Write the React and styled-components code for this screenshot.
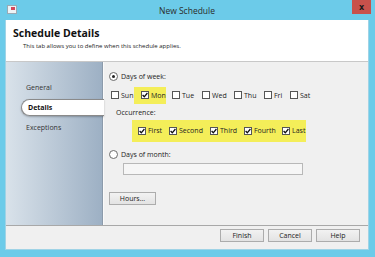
import React from "react";
import styled, { createGlobalStyle } from "styled-components";

const Global = createGlobalStyle`
  html, body {
    margin: 0;
    padding: 0;
    background: #6ccbe9;
  }
  body {
    font-family: "Open Sans", "Noto Sans", sans-serif;
  }
`;

const Window = styled.div`
  width: 375px;
  height: 257px;
  background: #6ccbe9;
  display: flex;
  flex-direction: column;
  box-sizing: border-box;
  padding: 0 6px 7px 5px;
  overflow: hidden;
`;

const TitleBar = styled.div`
  height: 20px;
  display: flex;
  align-items: center;
  position: relative;
  font-size: 8.5px;
  color: #2b2b2b;
  .icon {
    margin-left: 2px;
    margin-top: -1px;
  }
  .title {
    flex: 1;
    text-align: center;
    margin-left: -12px;
  }
`;

const CloseButton = styled.div`
  position: absolute;
  right: -2px;
  top: 0;
  width: 19px;
  height: 14px;
  background: #c8514b;
  color: #1a1a1a;
  font-family: "DejaVu Sans", sans-serif;
  font-weight: bold;
  font-size: 8px;
  display: flex;
  align-items: center;
  justify-content: center;
`;

const Body = styled.div`
  flex: 1;
  display: flex;
  flex-direction: column;
  background: #f0f0f0;
  border: 1px solid #9fd3e6;
  border-top: none;
`;

const Header = styled.div`
  height: 42px;
  background: #fff;
  border-bottom: 1px solid #c8c8c8;
  box-sizing: border-box;
  padding: 7px 0 0 7px;
  h1 {
    margin: 0;
    font-size: 10.5px;
    font-weight: 700;
    color: #111;
    line-height: 13px;
  }
  p {
    margin: 2px 0 0 10px;
    font-size: 6px;
    color: #222;
  }
`;

const Middle = styled.div`
  height: 163px;
  display: flex;
  border-bottom: 1px solid #a8a8a8;
`;

const Sidebar = styled.div`
  width: 97px;
  background: linear-gradient(to right, #d9e2ea, #9db0c4);
  border-right: 1px solid #8c9bab;
  padding-top: 17px;
  box-sizing: border-box;
  display: flex;
  flex-direction: column;
  align-items: flex-end;
  gap: 3px;
`;

const NavItem = styled.div`
  box-sizing: border-box;
  width: ${(p) => (p.$active ? "83px" : "76px")};
  height: 17px;
  margin-right: ${(p) => (p.$active ? "-2px" : "0")};
  display: flex;
  align-items: center;
  padding-left: ${(p) => (p.$active ? "6px" : "0")};
  font-size: 7px;
  font-weight: ${(p) => (p.$active ? 700 : 400)};
  color: ${(p) => (p.$active ? "#111" : "#333")};
  background: ${(p) => (p.$active ? "#fff" : "transparent")};
  border: ${(p) => (p.$active ? "1px solid #8a8a8a" : "none")};
  border-right: none;
  border-radius: 9px 0 0 9px;
  box-shadow: ${(p) => (p.$active ? "0 1px 2px rgba(0,0,0,0.25)" : "none")};
  position: relative;
  z-index: 1;
`;

const Content = styled.div`
  flex: 1;
  border-left: 1px solid #fafafa;
  padding: 9px 0 0 5px;
  display: flex;
  flex-direction: column;
  align-items: flex-start;
  font-size: 7px;
  color: #222;
`;

const RadioRow = styled.div`
  display: flex;
  align-items: center;
  gap: 3px;
  height: 10px;
  margin-top: ${(p) => p.$mt || 0}px;
`;

const Radio = styled.span`
  width: 7px;
  height: 7px;
  border-radius: 50%;
  border: 1px solid #6b6b6b;
  background: #fff;
  display: flex;
  align-items: center;
  justify-content: center;
  &::after {
    content: "";
    width: 3px;
    height: 3px;
    border-radius: 50%;
    background: ${(p) => (p.$checked ? "#222" : "transparent")};
  }
`;

const DaysRow = styled.div`
  display: flex;
  align-items: center;
  margin: 9px 0 0 2px;
  height: 10px;
`;

const Check = styled.label`
  display: flex;
  align-items: center;
  gap: 2px;
  height: 9px;
  width: ${(p) => p.$w}px;
  flex-shrink: 0;
  box-sizing: content-box;
  ${(p) =>
    p.$hl &&
    `
    background: #f4ee59;
    padding: 4px 0 4px 7px;
    margin: -4px 6px -4px -7px;
    width: ${p.$w - 6}px;
  `}
`;

const Box = styled.span`
  width: 6px;
  height: 6px;
  border: 1px solid #555;
  background: #fff;
  display: flex;
  align-items: center;
  justify-content: center;
  flex-shrink: 0;
`;

const OccLabel = styled.div`
  margin: 8px 0 0 7px;
  line-height: 10px;
`;

const OccBox = styled.div`
  margin: 2px 0 0 23px;
  background: #f4ee59;
  padding: 6px 0 7px 6px;
  width: 174px;
  box-sizing: border-box;
  display: flex;
  align-items: center;
`;

const TextInput = styled.div`
  width: 180px;
  height: 12px;
  box-sizing: border-box;
  border: 1px solid #b8b8b8;
  background: #f6f6f6;
  margin: 4px 0 0 14px;
`;

const Button = styled.div`
  width: ${(p) => p.$w || 44}px;
  height: 13px;
  box-sizing: border-box;
  border: 1px solid #acacac;
  background: linear-gradient(#f2f2f2, #e3e3e3);
  font-size: 7px;
  color: #222;
  display: flex;
  align-items: center;
  justify-content: center;
  margin-top: ${(p) => p.$mt || 0}px;
`;

const Footer = styled.div`
  flex: 1;
  display: flex;
  justify-content: flex-end;
  align-items: flex-start;
  gap: 4px;
  padding: 3px 8px 0 0;
`;

const CheckMark = () => (
  <svg width="6" height="6" viewBox="0 0 6 6">
    <path d="M0.6 3 L2.3 4.8 L5.4 1" fill="none" stroke="#111" strokeWidth="1.3" />
  </svg>
);

const CheckItem = ({ label, checked, w, hl }) => (
  <Check $w={w} $hl={hl}>
    <Box>{checked && <CheckMark />}</Box>
    {label}
  </Check>
);

const days = [
  { label: "Sun", w: 30 },
  { label: "Mon", w: 31, checked: true, hl: true },
  { label: "Tue", w: 30 },
  { label: "Wed", w: 32 },
  { label: "Thu", w: 30 },
  { label: "Fri", w: 26 },
  { label: "Sat", w: 26 },
];

const occurrences = [
  { label: "First", w: 31 },
  { label: "Second", w: 41 },
  { label: "Third", w: 34 },
  { label: "Fourth", w: 38 },
  { label: "Last", w: 24 },
];

export default function App() {
  return (
    <>
      <Global />
      <Window>
        <TitleBar>
          <svg className="icon" width="10" height="9" viewBox="0 0 10 9">
            <rect x="0.5" y="0.5" width="9" height="8" fill="#eef3f6" stroke="#9aa9b4" />
            <rect x="4" y="2" width="4" height="3" fill="#d5475a" />
          </svg>
          <span className="title">New Schedule</span>
          <CloseButton>x</CloseButton>
        </TitleBar>
        <Body>
          <Header>
            <h1>Schedule Details</h1>
            <p>This tab allows you to define when this schedule applies.</p>
          </Header>
          <Middle>
            <Sidebar>
              <NavItem>General</NavItem>
              <NavItem $active>Details</NavItem>
              <NavItem>Exceptions</NavItem>
            </Sidebar>
            <Content>
              <RadioRow>
                <Radio $checked />
                Days of week:
              </RadioRow>
              <DaysRow>
                {days.map((d) => (
                  <CheckItem key={d.label} {...d} />
                ))}
              </DaysRow>
              <OccLabel>Occurrence:</OccLabel>
              <OccBox>
                {occurrences.map((o) => (
                  <CheckItem key={o.label} {...o} checked />
                ))}
              </OccBox>
              <RadioRow $mt={7}>
                <Radio />
                Days of month:
              </RadioRow>
              <TextInput />
              <Button $w={47} $mt={17}>Hours...</Button>
            </Content>
          </Middle>
          <Footer>
            <Button>Finish</Button>
            <Button>Cancel</Button>
            <Button>Help</Button>
          </Footer>
        </Body>
      </Window>
    </>
  );
}
